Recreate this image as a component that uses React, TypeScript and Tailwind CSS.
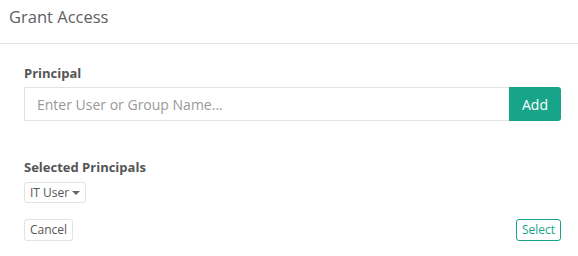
import { useState } from "react";

const font = { fontFamily: '"Open Sans", "Noto Sans", sans-serif' };

export default function App() {
  const [name, setName] = useState("");

  return (
    <div className="w-[578px] h-[256px] bg-white text-[#555]" style={font}>
      <div className="h-[44px] border-b border-[#e5e5e5] px-[9px] flex items-center">
        <h1 className="text-[16.5px] text-[#606060] leading-none -mt-[8px]">Grant Access</h1>
      </div>

      <div className="pl-[24px] pr-[17px] pt-[20px]">
        <label className="block text-[13px] font-bold leading-[18px] mb-[5px] text-[#555]">
          Principal
        </label>
        <div className="flex h-[34px]">
          <input
            value={name}
            onChange={(e) => setName(e.target.value)}
            placeholder="Enter User or Group Name..."
            className="flex-1 min-w-0 border border-[#e3e3e3] border-r-0 px-[12px] text-[14px] text-[#555] placeholder:text-[#999] outline-none"
            style={font}
          />
          <button className="w-[52px] bg-[#17a589] text-white text-[14px] rounded-r-[3px]">
            Add
          </button>
        </div>

        <div className="mt-[37px] text-[13px] font-bold leading-[18px] text-[#555]">
          Selected Principals
        </div>
        <button className="mt-[6px] h-[21px] px-[5px] border border-[#e3e3e3] rounded-[3px] text-[12px] text-[#555] flex items-center gap-[3px]">
          IT User
          <span className="w-0 h-0 border-l-[4px] border-r-[4px] border-t-[4px] border-l-transparent border-r-transparent border-t-[#666]" />
        </button>

        <div className="mt-[16px] flex justify-between">
          <button className="h-[22px] px-[5px] border border-[#e3e3e3] rounded-[3px] text-[12px] text-[#555]">
            Cancel
          </button>
          <button className="h-[22px] px-[5px] border border-[#17a589] rounded-[3px] text-[12px] text-[#17a589]">
            Select
          </button>
        </div>
      </div>
    </div>
  );
}
